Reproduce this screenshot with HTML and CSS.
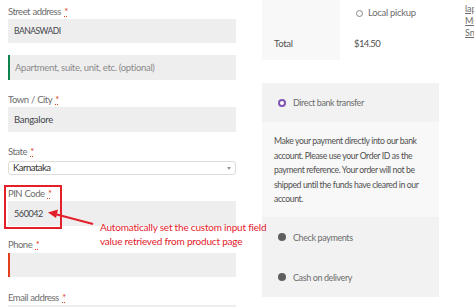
FILE: index.html
```html
<!DOCTYPE html>
<html>
<head>
<meta charset="utf-8">
<link rel="stylesheet" href="styles.css">
</head>
<body>
<div class="page">
  <div class="billing">
    <div class="field f-street">
      <label class="lbl">Street address <abbr class="req">*</abbr></label>
      <div class="input caps">BANASWADI</div>
    </div>
    <div class="field f-apt">
      <div class="input input-valid placeholder">Apartment, suite, unit, etc. (optional)</div>
    </div>
    <div class="field f-town">
      <label class="lbl">Town / City <abbr class="req">*</abbr></label>
      <div class="input">Bangalore</div>
    </div>
    <div class="field f-state">
      <label class="lbl">State <abbr class="req">*</abbr></label>
      <div class="select"><span>Karnataka</span><span class="caret"></span></div>
    </div>
    <div class="field f-pin">
      <label class="lbl">PIN Code <abbr class="req">*</abbr></label>
      <div class="input num">560042</div>
      <div class="highlight"></div>
      <svg class="arrow" width="60" height="20" viewBox="0 0 60 20">
        <line x1="46" y1="12" x2="8" y2="2" stroke="#e3202a" stroke-width="2"/>
        <polygon points="1,0.5 11,-2.5 9,6" fill="#e3202a"/>
      </svg>
      <div class="note">Automatically set the custom input field<br>value retrieved from product page</div>
    </div>
    <div class="field f-phone">
      <label class="lbl">Phone <abbr class="req">*</abbr></label>
      <div class="input input-invalid"></div>
    </div>
    <div class="field f-email">
      <label class="lbl">Email address <abbr class="req">*</abbr></label>
      <div class="input"></div>
    </div>
  </div>

  <div class="order">
    <div class="totals">
      <div class="totals-row ship">
        <div class="th"></div>
        <div class="td"><span class="radio-empty"></span>Local pickup</div>
      </div>
      <div class="totals-row total">
        <div class="th">Total</div>
        <div class="td">$14.50</div>
      </div>
    </div>

    <div class="payment">
      <div class="method active"><span class="dot dot-purple"></span>Direct bank transfer</div>
      <div class="desc">Make your payment directly into our bank account. Please use your Order ID as the payment reference. Your order will not be shipped until the funds have cleared in our account.</div>
      <div class="method"><span class="dot"></span>Check payments</div>
      <div class="method"><span class="dot"></span>Cash on delivery</div>
    </div>
  </div>

  <div class="side">
    <a>lap</a>
    <a>Mu</a>
    <a>Sn</a>
  </div>
</div>
</body>
</html>
```

FILE: styles.css
```css
html, body {
  margin: 0;
  padding: 0;
  background: #fff;
}
body {
  font-family: Lato, "Open Sans", sans-serif;
  color: #515151;
  overflow: hidden;
}
.page {
  display: flex;
  width: 474px;
  height: 307px;
  overflow: hidden;
}
.billing {
  width: 228px;
  margin-left: 8px;
  flex-shrink: 0;
  display: flex;
  flex-direction: column;
}
.field {
  position: relative;
  display: flex;
  flex-direction: column;
}
.lbl {
  font-size: 9.5px;
  letter-spacing: -0.5px;
  word-spacing: 0.5px;
  line-height: 14px;
  color: #6d6d6d;
  height: 14px;
}
.req {
  color: #e2401c;
  text-decoration: underline dotted;
  border: 0;
  margin-left: 1px;
}
.input {
  background: #eeeeee;
  height: 24px;
  line-height: 24px;
  font-size: 9.5px;
  letter-spacing: -0.3px;
  color: #43454b;
  padding-left: 6px;
  box-sizing: border-box;
}
.input.caps {
  font-size: 8.5px;
  letter-spacing: -0.5px;
}
.input.num {
  font-size: 9px;
  letter-spacing: -0.4px;
}
.placeholder {
  color: #8a8a8a;
}
.input-valid {
  border-left: 2px solid #0f834d;
  padding-left: 5px;
  height: 25px;
  line-height: 25px;
}
.input-invalid {
  border-left: 2px solid #e2401c;
}
.f-street { margin-top: 5px; }
.f-apt { margin-top: 12px; }
.f-town { margin-top: 13px; }
.f-town .input { height: 25px; line-height: 25px; }
.f-state { margin-top: 13px; }
.select {
  margin-top: 2px;
  height: 14px;
  border: 1px solid #ddd;
  border-radius: 3px;
  box-sizing: border-box;
  font-size: 9.5px;
  letter-spacing: -0.5px;
  line-height: 12px;
  color: #333;
  padding-left: 4px;
  display: flex;
  justify-content: space-between;
  align-items: center;
  background: #fff;
}
.caret {
  width: 0;
  height: 0;
  border-left: 2px solid transparent;
  border-right: 2px solid transparent;
  border-top: 3px solid #999;
  margin-right: 4px;
}
.f-pin { margin-top: 12px; }
.f-pin .input { height: 25px; line-height: 25px; }
.highlight {
  position: absolute;
  left: -4px;
  top: -2px;
  width: 58px;
  height: 44px;
  border: 2px solid #e3202a;
  box-sizing: border-box;
}
.arrow {
  position: absolute;
  left: 39px;
  top: 25px;
  overflow: visible;
}
.note {
  position: absolute;
  left: 92px;
  top: 33px;
  width: 200px;
  font-size: 10px;
  letter-spacing: -0.2px;
  line-height: 14px;
  color: #e3202a;
  white-space: nowrap;
}
.f-phone { margin-top: 12px; }
.f-phone .input { margin-top: 1px; }
.f-email { margin-top: 14px; }

.order {
  width: 177px;
  margin-left: 26px;
  flex-shrink: 0;
  display: flex;
  flex-direction: column;
}
.totals {
  width: 78px;
  height: 60px;
  background: #f8f8f8;
}
.totals-row {
  display: flex;
  font-size: 9.5px;
  letter-spacing: -0.3px;
  color: #515151;
}
.totals-row .th {
  width: 80px;
  padding-left: 12px;
  box-sizing: border-box;
  flex-shrink: 0;
}
.totals-row .td {
  white-space: nowrap;
  display: flex;
  align-items: center;
  margin-left: 12px;
}
.ship {
  height: 14px;
  margin-top: 6px;
  line-height: 14px;
  color: #6d6d6d;
}
.ship .td { margin-left: 14px; }
.total {
  margin-top: 17px;
  line-height: 14px;
}
.total .td { letter-spacing: -0.6px; }
.radio-empty {
  width: 5px;
  height: 5px;
  border: 1px solid #888;
  border-radius: 50%;
  margin-right: 5px;
}
.payment {
  margin-top: 23px;
  width: 177px;
  background: #f2f2f2;
  display: flex;
  flex-direction: column;
}
.method {
  height: 39px;
  display: flex;
  align-items: center;
  font-size: 9px;
  letter-spacing: -0.4px;
  color: #6d6d6d;
  padding-left: 16px;
}
.dot {
  width: 8px;
  height: 8px;
  border-radius: 50%;
  background: #5f5f5f;
  margin-right: 7px;
  flex-shrink: 0;
}
.dot-purple {
  background: #fff;
  box-sizing: border-box;
  border: 2.5px solid #7f54b3;
}
.desc {
  background: #f8f8f8;
  font-size: 8.7px;
  letter-spacing: -0.4px;
  line-height: 14.5px;
  color: #515151;
  padding: 12px 4px 10px 12px;
  height: 95px;
  box-sizing: border-box;
}
.payment .method:nth-child(3) { height: 40px; }
.payment .method:nth-child(4) { height: 40px; }

.side {
  margin-left: 26px;
  display: flex;
  flex-direction: column;
  font-size: 9px;
  line-height: 12px;
  padding-top: 3px;
  color: #6d6d6d;
}
.side a {
  text-decoration: underline;
  white-space: nowrap;
}
```
